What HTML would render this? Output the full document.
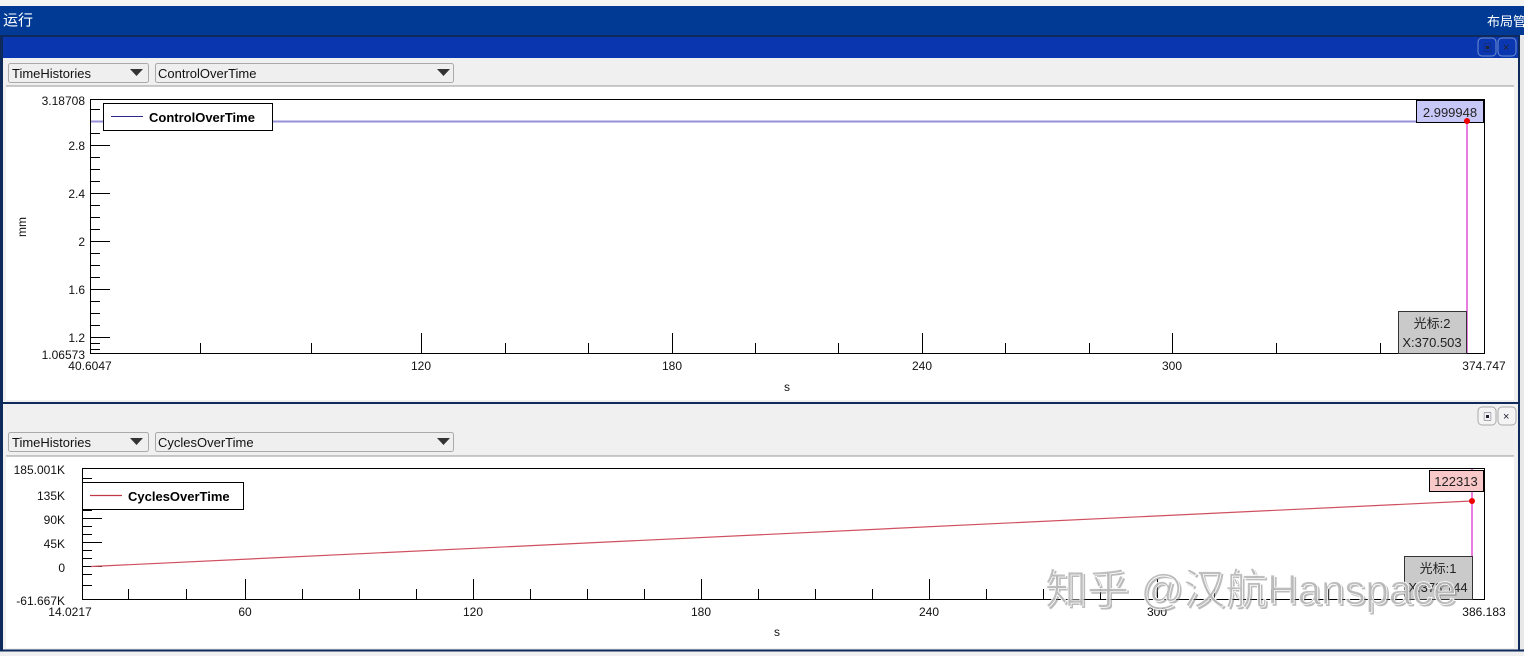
<!DOCTYPE html><html><head><meta charset="utf-8"><style>body{margin:0;width:1524px;height:656px;overflow:hidden;background:#f0f0f0}svg{display:block}text{font-family:"Liberation Sans","Noto Sans CJK SC",sans-serif}</style></head><body>
<svg width="1524" height="656" viewBox="0 0 1524 656" xmlns="http://www.w3.org/2000/svg">
<rect x="0" y="0" width="1524" height="6" fill="#f4f4f4"/>
<rect x="0" y="6" width="1524" height="29" fill="#003a94"/>
<text x="3" y="25" font-size="15" fill="#fff">运行</text>
<text x="1487" y="26" font-size="13" fill="#fff">布局管</text>
<rect x="0" y="35" width="1524" height="621" fill="#0d2a5a"/>
<rect x="1520" y="35" width="4" height="621" fill="#e8e8e8"/>
<!-- panel1 -->
<rect x="3" y="37" width="1515" height="21" fill="#0a36b0"/>
<rect x="3" y="58" width="1515" height="344" fill="#f0f0f0"/>
<rect x="1478" y="38" width="18" height="18" rx="4" fill="#0a36b0" stroke="#6f8fd0"/><text x="1483" y="51" font-size="9" fill="#223">▣</text>
<rect x="1498" y="38" width="18" height="18" rx="4" fill="#0a36b0" stroke="#6f8fd0"/><text x="1503" y="51" font-size="11" fill="#223">×</text>
<rect x="8.5" y="63.5" width="140" height="19" rx="2" fill="#efefef" stroke="#aaa"/><text x="12" y="78" font-size="13" fill="#111">TimeHistories</text><path d="M130 69h13l-6.5 7z" fill="#333"/>
<rect x="155.5" y="63.5" width="298" height="19" rx="2" fill="#efefef" stroke="#aaa"/><text x="158" y="78" font-size="13" fill="#111">ControlOverTime</text><path d="M437 69h13l-6.5 7z" fill="#333"/>
<rect x="6" y="86" width="1508" height="314" fill="#fff"/>
<line x1="6" y1="86" x2="1514" y2="86" stroke="#999"/>
<rect x="90.5" y="99.5" width="1394" height="254" fill="#fff" stroke="#000"/>
<g stroke="#000">
<path d="M90 145.5h20M90 193.5h20M90 241.5h20M90 289.5h20M90 337.5h20"/>
<path d="M90 109.5h10M90 121.5h10M90 133.5h10M90 157.5h10M90 169.5h10M90 181.5h10M90 205.5h10M90 217.5h10M90 229.5h10M90 253.5h10M90 265.5h10M90 277.5h10M90 301.5h10M90 313.5h10M90 325.5h10M90 349.5h10M90 343.5h10"/>
<path d="M421.5 353v-20M672.5 353v-20M922.5 353v-20M1172.5 353v-20"/>
<path d="M200.5 353v-10M311.5 353v-10M505.5 353v-10M588.5 353v-10M755.5 353v-10M838.5 353v-10M1005.5 353v-10M1089.5 353v-10M1276.5 353v-10M1380.5 353v-10"/>
</g>
<g font-size="12" fill="#111" text-anchor="end">
<text x="85" y="105">3.18708</text><text x="85" y="150">2.8</text><text x="85" y="198">2.4</text><text x="85" y="246">2</text><text x="85" y="294">1.6</text><text x="85" y="342">1.2</text><text x="85" y="359">1.06573</text>
</g>
<g font-size="12" fill="#111" text-anchor="middle">
<text x="90" y="370">40.6047</text><text x="421" y="370">120</text><text x="672" y="370">180</text><text x="922" y="370">240</text><text x="1172" y="370">300</text><text x="1484" y="370">374.747</text><text x="787" y="391">s</text>
</g>
<text transform="translate(26,227) rotate(-90)" font-size="12" text-anchor="middle" fill="#111">mm</text>
<line x1="91" y1="121.5" x2="1484" y2="121.5" stroke="#9890d8" stroke-width="2"/>
<line x1="1467" y1="100" x2="1467" y2="353" stroke="#e050d8" stroke-width="1.5"/>
<rect x="103.5" y="103.5" width="169" height="27" fill="#fff" stroke="#000"/>
<line x1="111" y1="116.5" x2="143" y2="116.5" stroke="#2a2a88"/>
<text x="149" y="122" font-size="13" font-weight="bold" fill="#000">ControlOverTime</text>
<rect x="1416.5" y="100.5" width="67" height="22" fill="#c8c8f8" stroke="#000"/>
<text x="1450" y="117" font-size="13" text-anchor="middle" fill="#222">2.999948</text>
<circle cx="1467" cy="121" r="3" fill="#e00"/>
<rect x="1398.5" y="311.5" width="68" height="42" fill="#cacaca" stroke="#333"/>
<text x="1432" y="328" font-size="13" text-anchor="middle" fill="#222">光标:2</text>
<text x="1432" y="347" font-size="13" text-anchor="middle" fill="#222">X:370.503</text>
<!-- panel2 -->
<rect x="3" y="404" width="1515" height="246" fill="#f0f0f0"/>
<rect x="1478" y="407" width="18" height="18" rx="4" fill="#f4f4f4" stroke="#aaa"/><text x="1483" y="420" font-size="9" fill="#223">▣</text>
<rect x="1498" y="407" width="18" height="18" rx="4" fill="#f4f4f4" stroke="#aaa"/><text x="1503" y="420" font-size="11" fill="#223">×</text>
<rect x="8.5" y="432.5" width="140" height="19" rx="2" fill="#efefef" stroke="#aaa"/><text x="12" y="447" font-size="13" fill="#111">TimeHistories</text><path d="M130 438h13l-6.5 7z" fill="#333"/>
<rect x="155.5" y="432.5" width="298" height="19" rx="2" fill="#efefef" stroke="#aaa"/><text x="158" y="447" font-size="13" fill="#111">CyclesOverTime</text><path d="M437 438h13l-6.5 7z" fill="#333"/>
<rect x="6" y="456" width="1508" height="192" fill="#fff"/>
<line x1="6" y1="456" x2="1514" y2="456" stroke="#999"/>
<rect x="82.5" y="468.5" width="1402" height="131" fill="#fff" stroke="#000"/>
<g stroke="#000">
<path d="M82 494.5h20M82 518.5h20M82 542.5h20M82 566.5h20"/>
<path d="M82 478.5h10M82 486.5h10M82 502.5h10M82 510.5h10M82 526.5h10M82 534.5h10M82 550.5h10M82 558.5h10M82 574.5h10M82 585.5h10"/>
<path d="M245.5 599v-20M473.5 599v-20M701.5 599v-20M929.5 599v-20M1157.5 599v-20"/>
<path d="M128.5 599v-10M186.5 599v-10M302.5 599v-10M359.5 599v-10M416.5 599v-10M530.5 599v-10M587.5 599v-10M644.5 599v-10M758.5 599v-10M815.5 599v-10M872.5 599v-10M986.5 599v-10M1043.5 599v-10M1100.5 599v-10M1214.5 599v-10M1271.5 599v-10M1328.5 599v-10"/>
</g>
<g font-size="12" fill="#111" text-anchor="end">
<text x="65" y="474">185.001K</text><text x="65" y="500">135K</text><text x="65" y="524">90K</text><text x="65" y="548">45K</text><text x="65" y="572">0</text><text x="65" y="605">-61.667K</text>
</g>
<g font-size="12" fill="#111" text-anchor="middle">
<text x="70" y="616">14.0217</text><text x="245" y="616">60</text><text x="473" y="616">120</text><text x="701" y="616">180</text><text x="929" y="616">240</text><text x="1157" y="616">300</text><text x="1484" y="616">386.183</text><text x="777" y="636">s</text>
</g>
<line x1="91" y1="566.5" x2="1472" y2="501" stroke="#d05060" stroke-width="1.2"/>
<line x1="1472" y1="469" x2="1472" y2="599" stroke="#e050d8" stroke-width="1.5"/>
<rect x="82.5" y="482.5" width="161" height="27" fill="#fff" stroke="#000"/>
<line x1="90" y1="495.5" x2="122" y2="495.5" stroke="#c03848" stroke-width="1.2"/>
<text x="128" y="501" font-size="13" font-weight="bold" fill="#000">CyclesOverTime</text>
<rect x="1429.5" y="470.5" width="54" height="21" fill="#f8c8c8" stroke="#000"/>
<text x="1456" y="486" font-size="13" text-anchor="middle" fill="#222">122313</text>
<circle cx="1472" cy="501" r="3" fill="#e00"/>
<rect x="1404.5" y="556.5" width="68" height="43" fill="#cacaca" stroke="#333"/>
<text x="1438" y="573" font-size="13" text-anchor="middle" fill="#222">光标:1</text>
<text x="1438" y="592" font-size="13" text-anchor="middle" fill="#222">X:373.144</text>
<text x="1047" y="606" font-size="42" fill="#777" fill-opacity="0.5">知乎 @汉航Hanspace</text>
<text x="1045" y="604" font-size="42" fill="#b8b8b8" fill-opacity="0.9" stroke="#fff" stroke-width="0.8">知乎 @汉航Hanspace</text>
<rect x="0" y="650" width="1524" height="6" fill="#f0f0f0"/>
<line x1="0" y1="650.5" x2="1524" y2="650.5" stroke="#0d2a5a" stroke-width="2"/>
</svg></body></html>
